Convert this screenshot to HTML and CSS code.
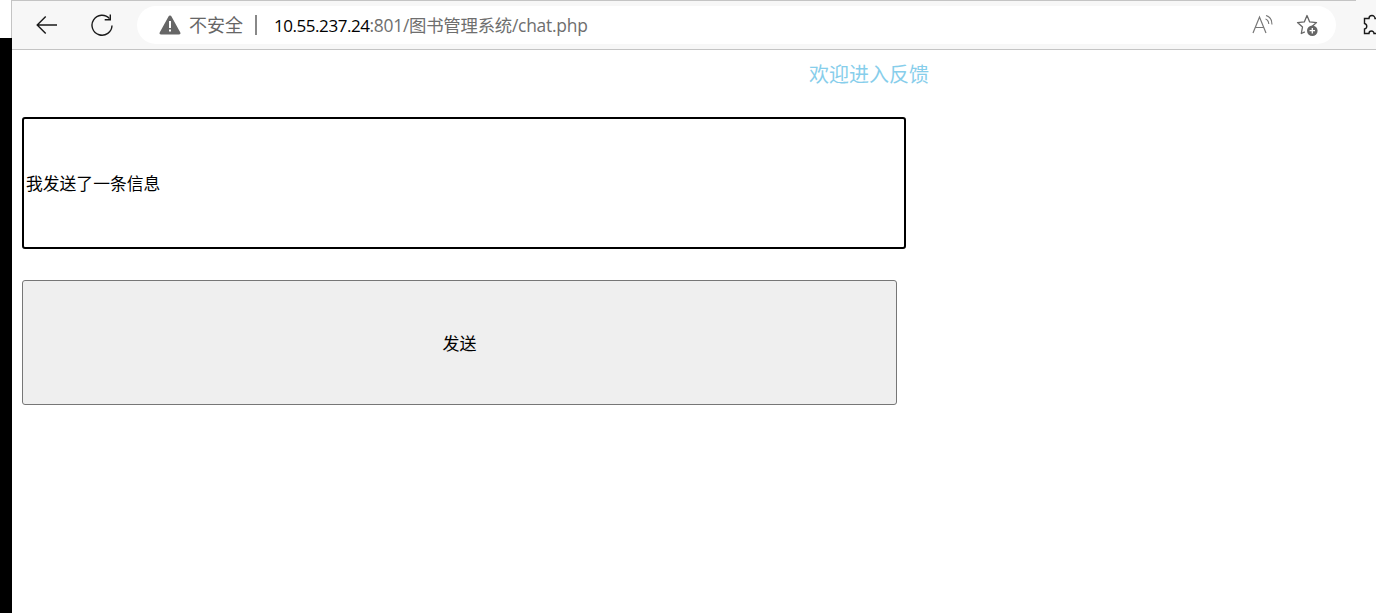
FILE: index.html
```html
<!DOCTYPE html>
<html lang="zh-CN">
<head>
<meta charset="utf-8">
<title>chat.php</title>
<link rel="stylesheet" href="styles.css">
</head>
<body>
<div class="desk">
  <div class="desk-top"></div>
  <div class="desk-bar"></div>
</div>
<div class="window">
  <header class="toolbar">
    <button class="nav-btn back" aria-label="后退">
      <svg width="24" height="24" viewBox="0 0 24 24" fill="none" stroke="#1a1a1a" stroke-width="1.4"><path d="M22 12H2.500M10.700 3.500 2.200 12l8.500 8.500"/></svg>
    </button>
    <button class="nav-btn reload" aria-label="刷新">
      <svg width="24" height="24" viewBox="0 0 24 24" fill="none" stroke="#1a1a1a" stroke-width="1.4"><path d="M19.500 5.600A10 10 0 1 0 22 12.500"/><path d="M20.300 1.500v5.200h-5.600"/></svg>
    </button>
    <div class="address">
      <svg class="warn" width="22" height="20" viewBox="0 0 22 20"><path d="M11 .5c.7 0 1.200.4 1.500 1l8.800 16c.5 1-.1 2-1.300 2H2c-1.200 0-1.800-1-1.300-2l8.800-16c.3-.6.800-1 1.500-1z" fill="#666"/><rect x="10" y="6" width="2" height="7" fill="#fff"/><rect x="10" y="14.500" width="2" height="2" fill="#fff"/></svg>
      <span class="insecure">不安全</span>
      <span class="sep"></span>
      <span class="url"><span class="host">10.55.237.24</span>:801/图书管理系统/chat.php</span>
      <svg class="read" width="22" height="22" viewBox="0 0 22 22" fill="none" stroke="#777" stroke-width="1.200"><path d="M1 19 7.500 3 14 19M3.300 13.500h8.400"/><path d="M13.500 5c2 .5 3 2.500 3.300 5M14 1.500c3.500 1 6 4.500 6 9" stroke-width="1.100"/></svg>
      <svg class="fav" width="24" height="24" viewBox="0 0 24 24" fill="none" stroke="#666" stroke-width="1.300" stroke-linejoin="round"><path d="M8.800 18.800 5.300 20.500 6.500 14 1.500 9.600 8.300 8.900 11 2.500 13.700 8.900 20.500 9.600 16 13.500"/><circle cx="16.300" cy="17.700" r="5.300" fill="#666" stroke="none"/><path d="M16.300 15v5.400M13.600 17.700H19" stroke="#fff" stroke-width="1.300"/></svg>
    </div>
    <svg class="ext" width="22" height="22" viewBox="0 0 22 22" fill="none" stroke="#1a1a1a" stroke-width="1.400"><path d="M8 4.500a3 3 0 0 1 6 0h4v4.300a3 3 0 0 1 0 5.800v4.900h-5a2.500 2.500 0 0 0-5 0H3.500v-4.500a2.800 2.800 0 0 0 0-5.500V4.500z"/></svg>
  </header>
  <main class="page">
    <h1 class="title">欢迎进入反馈</h1>
    <form class="chat">
      <input class="msg" type="text" value="我发送了一条信息">
      <button class="send" type="button">发送</button>
    </form>
  </main>
</div>
</body>
</html>
```
FILE: styles.css
```css
* { box-sizing: border-box; }
html, body { margin: 0; height: 100%; overflow: hidden; }
body { display: flex; background: #fff; font-family: "Liberation Sans", "Noto Sans CJK SC", sans-serif; }
.desk { width: 12px; flex: none; display: flex; flex-direction: column; }
.desk-top { height: 38px; background: #fff; border-right: 1px solid #c4c4c4; }
.desk-bar { flex: 1; background: #000; }
.window { flex: 1; min-width: 0; display: flex; flex-direction: column; }
.toolbar {
  height: 50px; flex: none; display: flex; align-items: center;
  background: #f7f7f7;
  border-bottom: 1px solid #c4c4c4;
  padding: 1px 0 0 23px;
  position: relative;
}
.toolbar::before {
  content: ""; position: absolute; left: 0; top: 0;
  width: 1344px; height: 1px; background: #c4c4c4;
}
.nav-btn { width: 24px; height: 24px; padding: 0; border: 0; background: none; display: block; }
.reload { margin-left: 31px; }
.address {
  width: 1199px; height: 38px; margin-left: 23px; flex: none;
  display: flex; align-items: center;
  background: #fff; border-radius: 19px;
  padding-left: 22px;
  font-family: "Open Sans", "Noto Sans CJK SC", sans-serif;
}
.warn { flex: none; }
.insecure { margin: 0 0 2px 8px; font-size: 18px; color: #666; font-family: "Noto Sans CJK SC", sans-serif; font-weight: 400; }
.sep { width: 2px; height: 20px; background: #888; margin: 0 17px 0 12px; }
.url { margin-bottom: 2px; font-size: 17.400px; letter-spacing: -.24px; color: #6e6e6e; white-space: nowrap; }
.host { color: #000; font-size: 17px; letter-spacing: -.45px; }
.read { margin-left: auto; flex: none; }
.fav { margin-left: 22px; margin-right: 16px; flex: none; }
.ext { margin-left: 25px; flex: none; }
.page { flex: 1; padding: 0 10px; }
.title {
  margin: 12px 0 0 787px; width: max-content;
  font-size: 20px; line-height: 23px; font-weight: 400; color: #87ceeb;
  font-family: "Noto Sans CJK SC", sans-serif;
}
.chat { display: flex; flex-direction: column; align-items: flex-start; margin-top: 32px; }
.msg {
  width: 884px; height: 132px; padding: 0 2px;
  border: 2px solid #000; border-radius: 3px; outline: 0;
  font: 400 16.800px "Noto Sans CJK SC", sans-serif; color: #000; background: #fff;
}
.send {
  width: 875px; height: 125px; margin-top: 31px; padding: 0 0 1px;
  border: 1px solid #767676; border-radius: 3px; background: #efefef;
  font: 400 17px "Noto Sans CJK SC", sans-serif; color: #000;
}
```
